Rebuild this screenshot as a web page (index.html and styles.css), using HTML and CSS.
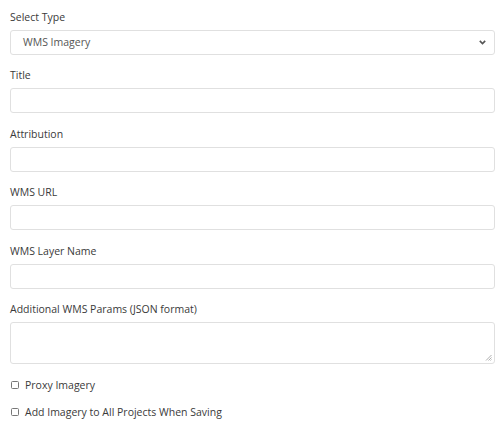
FILE: index.html
```html
<!DOCTYPE html>
<html>
<head>
<meta charset="utf-8">
<link rel="stylesheet" href="styles.css">
</head>
<body>
<form class="form">
  <div class="group">
    <label class="label">Select Type</label>
    <div class="select">
      <span class="select-text">WMS Imagery</span>
      <svg class="chev" width="7" height="5" viewBox="0 0 7 5"><path d="M0.8 0.9 L3.5 3.6 L6.2 0.9" fill="none" stroke="#555" stroke-width="1.6"/></svg>
    </div>
  </div>
  <div class="group">
    <label class="label">Title</label>
    <div class="input"></div>
  </div>
  <div class="group">
    <label class="label">Attribution</label>
    <div class="input"></div>
  </div>
  <div class="group">
    <label class="label">WMS URL</label>
    <div class="input"></div>
  </div>
  <div class="group">
    <label class="label">WMS Layer Name</label>
    <div class="input"></div>
  </div>
  <div class="group">
    <label class="label">Additional WMS Params (JSON format)</label>
    <div class="textarea">
      <svg class="grip" width="7" height="7" viewBox="0 0 7 7"><path d="M6.5 1 L1 6.5 M6.5 3.5 L3.5 6.5 M6.5 5.5 L5.5 6.5" stroke="#999" stroke-width="0.8"/></svg>
    </div>
  </div>
  <div class="check-row first">
    <span class="box"></span><span class="check-label">Proxy Imagery</span>
  </div>
  <div class="check-row">
    <span class="box"></span><span class="check-label">Add Imagery to All Projects When Saving</span>
  </div>
</form>
</body>
</html>
```
FILE: styles.css
```css
html, body {
  margin: 0;
  padding: 0;
  background: #fff;
}
body {
  font-family: "Open Sans", "Noto Sans", sans-serif;
  font-size: 10.5px;
  color: #3a3a3a;
}
.form {
  padding: 9.5px 5px 0 10px;
  display: flex;
  flex-direction: column;
}
.group {
  display: flex;
  flex-direction: column;
  margin-bottom: 13.5px;
}
.label {
  line-height: 14px;
  height: 14px;
  margin-bottom: 6px;
  color: #3a3a3a;
}
.select, .input, .textarea {
  box-sizing: border-box;
  height: 25px;
  border: 1px solid #e0e0e0;
  border-radius: 3px;
  background: #fff;
}
.select {
  display: flex;
  align-items: center;
  justify-content: space-between;
  padding: 0 8px 0 12px;
}
.select-text {
  color: #555;
}
.chev {
  display: block;
}
.textarea {
  height: 42px;
  display: flex;
  align-items: flex-end;
  justify-content: flex-end;
  padding: 0 2px 2px 0;
}
.grip {
  display: block;
}
.check-row {
  display: flex;
  align-items: center;
  height: 16px;
  margin-bottom: 11.5px;
}
.check-row.first {
  margin-top: -1px;
}
.box {
  box-sizing: border-box;
  width: 8px;
  height: 8px;
  border: 1px solid #777;
  border-radius: 1.5px;
  margin: 0 6px 0 1px;
}
.check-label {
  color: #3a3a3a;
}
```
